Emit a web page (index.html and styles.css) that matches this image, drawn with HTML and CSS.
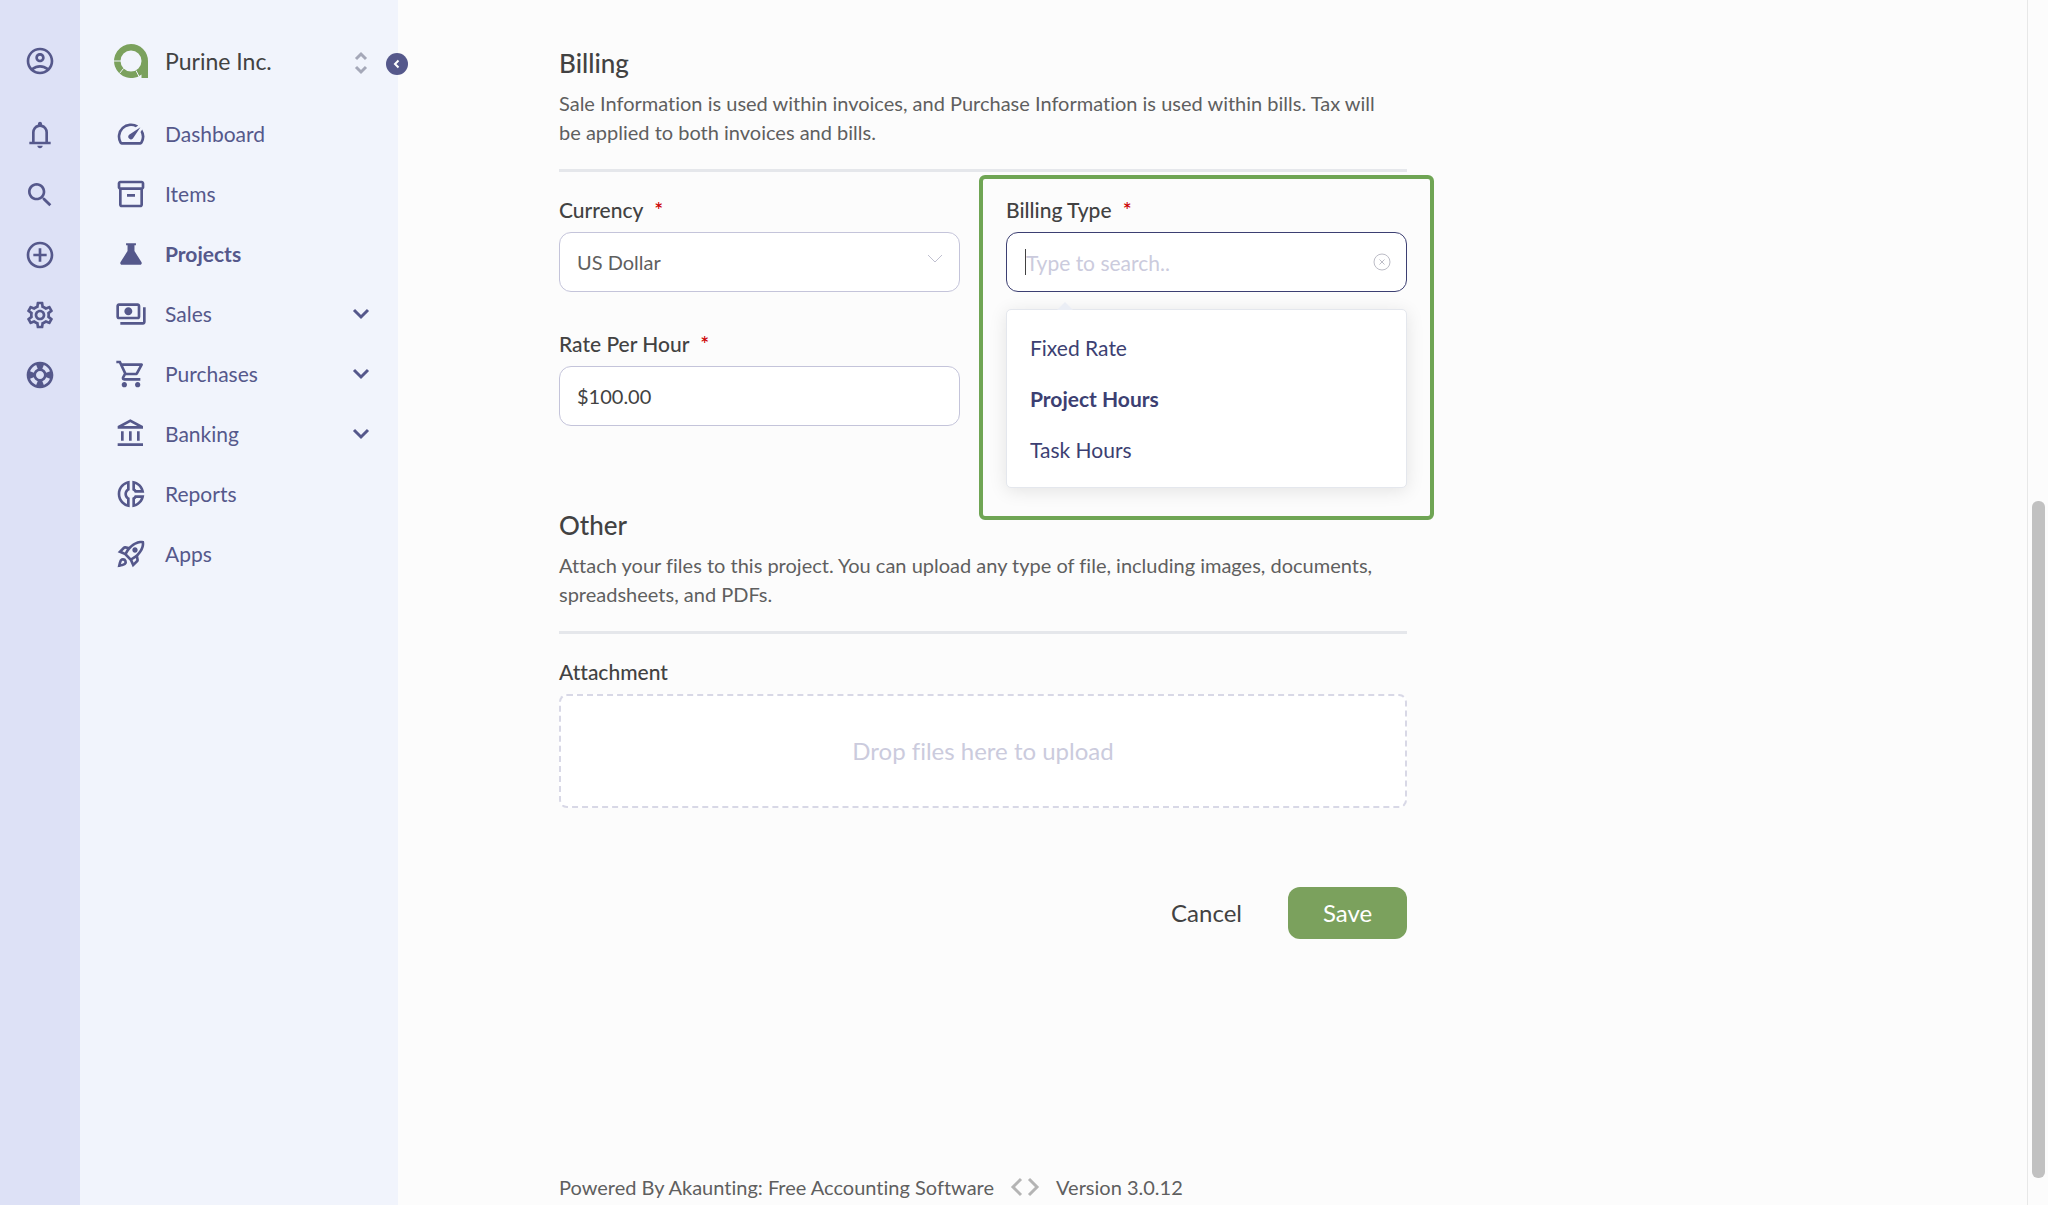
FILE: index.html
```html
<!DOCTYPE html>
<html lang="en">
<head>
<meta charset="utf-8">
<meta name="viewport" content="width=device-width, initial-scale=1">
<title>Edit Project - Purine Inc.</title>
<link rel="stylesheet" href="styles.css">
</head>
<body>
<div class="app">
  <nav class="rail" aria-label="Shortcuts">
    <a class="rail-link rail-profile" href="#" aria-label="Profile"><svg class="icon" viewBox="0 0 24 24"><path d="M12 2C6.48 2 2 6.48 2 12s4.480 10 10 10 10-4.480 10-10S17.520 2 12 2zM7.350 18.500C8.660 17.560 10.260 17 12 17s3.340.560 4.650 1.500c-1.310.940-2.910 1.500-4.650 1.500s-3.340-.560-4.650-1.500zm10.790-1.380C16.450 15.800 14.320 15 12 15s-4.450.800-6.140 2.120C4.700 15.730 4 13.950 4 12c0-4.420 3.580-8 8-8s8 3.580 8 8c0 1.950-.700 3.730-1.860 5.120zM12 6c-1.930 0-3.500 1.570-3.500 3.500S10.070 13 12 13s3.500-1.570 3.500-3.500S13.930 6 12 6zm0 5c-.830 0-1.500-.670-1.500-1.500S11.170 8 12 8s1.500.670 1.500 1.500S12.830 11 12 11z"/></svg></a>
    <a class="rail-link" href="#" aria-label="Notifications"><svg class="icon" viewBox="0 0 24 24"><path d="M4 19v-2h2v-7q0-2.075 1.250-3.688Q8.500 4.700 10.500 4.200v-.700q0-.625.438-1.062Q11.375 2 12 2t1.062.438q.438.437.438 1.062v.700q2 .500 3.250 2.112Q18 7.925 18 10v7h2v2Zm8 3q-.825 0-1.412-.587Q10 20.825 10 20h4q0 .825-.587 1.413Q12.825 22 12 22Zm-4-5h8v-7q0-1.650-1.175-2.825Q13.650 6 12 6q-1.650 0-2.825 1.175Q8 8.350 8 10Z"/></svg></a>
    <a class="rail-link" href="#" aria-label="Search"><svg class="icon" viewBox="0 0 24 24"><path d="M15.500 14h-.790l-.280-.270C15.410 12.590 16 11.110 16 9.500 16 5.910 13.090 3 9.500 3S3 5.910 3 9.500 5.910 16 9.500 16c1.610 0 3.090-.590 4.230-1.570l.270.280v.790l5 4.990L20.490 19l-4.990-5zm-6 0C7.010 14 5 11.990 5 9.500S7.010 5 9.500 5 14 7.010 14 9.500 11.990 14 9.500 14z"/></svg></a>
    <a class="rail-link" href="#" aria-label="New"><svg class="icon" viewBox="0 0 24 24"><path d="M13 7h-2v4H7v2h4v4h2v-4h4v-2h-4V7zm-1-5C6.480 2 2 6.480 2 12s4.480 10 10 10 10-4.480 10-10S17.520 2 12 2zm0 18c-4.410 0-8-3.590-8-8s3.590-8 8-8 8 3.590 8 8-3.590 8-8 8z"/></svg></a>
    <a class="rail-link" href="#" aria-label="Settings"><svg class="icon" viewBox="0 0 24 24"><path d="M19.43 12.98c.04-.32.07-.64.07-.98 0-.34-.03-.66-.07-.98l2.11-1.65c.19-.15.24-.42.12-.64l-2-3.46c-.09-.16-.26-.25-.44-.25-.06 0-.12.01-.17.03l-2.49 1c-.52-.4-1.08-.73-1.69-.98l-.38-2.65C14.46 2.18 14.25 2 14 2h-4c-.25 0-.46.18-.49.42l-.38 2.65c-.61.25-1.17.59-1.69.98l-2.49-1c-.06-.02-.12-.03-.18-.03-.17 0-.34.09-.43.25l-2 3.46c-.13.22-.07.49.12.64l2.11 1.65c-.04.32-.07.65-.07.98 0 .33.03.66.07.98l-2.11 1.65c-.19.15-.24.42-.12.64l2 3.46c.09.16.26.25.44.25.06 0 .12-.01.17-.03l2.49-1c.52.4 1.08.73 1.69.98l.38 2.65c.03.24.24.42.49.42h4c.25 0 .46-.18.49-.42l.38-2.65c.61-.25 1.17-.59 1.69-.98l2.49 1c.06.02.12.03.18.03.17 0 .34-.09.43-.25l2-3.46c.12-.22.07-.49-.12-.64l-2.11-1.65zm-1.98-1.71c.04.31.05.52.05.73 0 .21-.02.43-.05.73l-.14 1.13.89.7 1.08.84-.7 1.21-1.27-.51-1.04-.42-.9.68c-.43.32-.84.56-1.25.73l-1.06.43-.16 1.13-.2 1.35h-1.4l-.19-1.35-.16-1.13-1.06-.43c-.43-.18-.83-.41-1.23-.71l-.91-.7-1.06.43-1.27.51-.7-1.21 1.08-.84.89-.7-.14-1.13c-.03-.31-.05-.54-.05-.74s.02-.43.05-.73l.14-1.13-.89-.7-1.08-.84.7-1.21 1.27.51 1.04.42.9-.68c.43-.32.84-.56 1.25-.73l1.06-.43.16-1.13.2-1.35h1.39l.19 1.35.16 1.13 1.06.43c.43.18.83.41 1.23.71l.91.7 1.06-.43 1.27-.51.7 1.21-1.07.85-.89.7.14 1.13zM12 8c-2.21 0-4 1.79-4 4s1.79 4 4 4 4-1.79 4-4-1.79-4-4-4zm0 6c-1.1 0-2-.9-2-2s.9-2 2-2 2 .9 2 2-.9 2-2 2z"/></svg></a>
    <a class="rail-link" href="#" aria-label="Help"><svg class="icon" viewBox="0 0 24 24"><path d="M12 2C6.48 2 2 6.48 2 12s4.48 10 10 10 10-4.48 10-10S17.52 2 12 2zm7.46 7.12l-2.78 1.15c-.51-1.36-1.58-2.44-2.95-2.94l1.15-2.78c2.1.8 3.77 2.47 4.58 4.57zM12 15c-1.66 0-3-1.34-3-3s1.34-3 3-3 3 1.34 3 3-1.34 3-3 3zM9.13 4.54l1.17 2.78c-1.38.5-2.47 1.59-2.98 2.97L4.54 9.13c.81-2.11 2.48-3.78 4.59-4.59zM4.54 14.87l2.78-1.15c.51 1.38 1.59 2.46 2.97 2.96l-1.17 2.78c-2.1-.81-3.77-2.48-4.58-4.59zm10.34 4.59l-1.15-2.78c1.37-.51 2.45-1.59 2.95-2.97l2.78 1.17c-.81 2.1-2.48 3.77-4.58 4.58z"/></svg></a>
  </nav>

  <aside class="sidebar">
    <button class="company" type="button">
      <svg class="logo" viewBox="0 0 34 34"><path class="logo-fill" d="M17 0a17 17 0 0 1 17 17v17h-6.500v-3.600A17 17 0 1 1 17 0zm0 6.500a10.500 10.500 0 1 0 0 21 10.500 10.500 0 0 0 0-21z"/><path class="logo-gap" d="M0 17h7M9.500 24.500l-4 5M22 26.500l3 6"/></svg>
      <span class="company-name">Purine Inc.</span>
      <svg class="icon company-switch" viewBox="0 0 28 28"><path d="M9 10l5-5 5 5M9 18l5 5 5-5"/></svg>
    </button>
    <button class="collapse" type="button" aria-label="Collapse menu"><svg class="collapse-icon" viewBox="0 0 12 12"><path d="M7.500 2.500L4 6l3.500 3.500"/></svg></button>
    <nav class="menu" aria-label="Main">
      <a class="menu-link" href="#"><svg class="icon" viewBox="0 0 24 24"><path d="M20.38 8.57l-1.230 1.850a8 8 0 0 1-.220 7.580H5.070A8 8 0 0 1 15.580 6.850l1.850-1.230A10 10 0 0 0 3.350 19a2 2 0 0 0 1.720 1h13.850a2 2 0 0 0 1.740-1 10 10 0 0 0-.270-10.440zm-9.790 6.840a2 2 0 0 0 2.830 0l5.660-8.490-8.490 5.660a2 2 0 0 0 0 2.830z"/></svg><span>Dashboard</span></a>
      <a class="menu-link" href="#"><svg class="icon" viewBox="0 0 24 24"><path d="M20 2H4c-1 0-2 .9-2 2v3.010c0 .72.43 1.340 1 1.690V20c0 1.100 1.100 2 2 2h14c.9 0 2-.9 2-2V8.700c.57-.35 1-.97 1-1.690V4c0-1.100-1-2-2-2zm-1 18H5V9h14v11zm1-13H4V4h16v3zM9 12h6v2H9z"/></svg><span>Items</span></a>
      <a class="menu-link current" href="#" aria-current="page"><svg class="icon" viewBox="0 0 24 24"><path d="M8.300 4h7.400v1.400h-1.100v4.400l5.200 8.200c.6 1 .1 2-1 2H5.200c-1.100 0-1.600-1-1-2l5.200-8.200V5.400H8.300z"/></svg><span>Projects</span></a>
      <a class="menu-link" href="#"><svg class="icon" viewBox="0 0 24 24"><path d="M19 14V6c0-1.100-.9-2-2-2H3c-1.100 0-2 .9-2 2v8c0 1.100.9 2 2 2h14c1.100 0 2-.9 2-2zm-2 0H3V6h14v8zm-7-7c-1.660 0-3 1.340-3 3s1.340 3 3 3 3-1.340 3-3-1.340-3-3-3zm13 0v11c0 1.100-.9 2-2 2H4v-2h17V7h2z"/></svg><span>Sales</span><svg class="chevron" viewBox="0 0 18 12"><path d="M2 2l7 7 7-7"/></svg></a>
      <a class="menu-link" href="#"><svg class="icon" viewBox="0 0 24 24"><path d="M15.55 13c.75 0 1.41-.41 1.75-1.03l3.58-6.49c.37-.66-.11-1.48-.87-1.48H5.210l-.94-2H1v2h2l3.600 7.590-1.350 2.440C4.520 15.370 5.480 17 7 17h12v-2H7l1.100-2h7.450zM6.160 6h12.150l-2.760 5H8.530L6.160 6zM7 18c-1.100 0-1.990.9-1.990 2S5.900 22 7 22s2-.9 2-2-.9-2-2-2zm10 0c-1.100 0-1.990.9-1.990 2s.89 2 1.990 2 2-.9 2-2-.9-2-2-2z"/></svg><span>Purchases</span><svg class="chevron" viewBox="0 0 18 12"><path d="M2 2l7 7 7-7"/></svg></a>
      <a class="menu-link" href="#"><svg class="icon" viewBox="0 0 24 24"><path d="M6.500 10h-2v7h2v-7zm6 0h-2v7h2v-7zm8.500 9H2v2h19v-2zm-2.500-9h-2v7h2v-7zm-7-6.740L16.710 6H6.290l5.210-2.740m0-2.260L2 6v2h19V6l-9.500-5z"/></svg><span>Banking</span><svg class="chevron" viewBox="0 0 18 12"><path d="M2 2l7 7 7-7"/></svg></a>
      <a class="menu-link" href="#"><svg class="icon" viewBox="0 0 24 24"><path d="M14.820 11h7.130c-.47-4.720-4.230-8.480-8.950-8.950v7.130c.85.31 1.510.97 1.820 1.820zM15 4.580C17 5.400 18.600 7 19.420 9h-3.430c-.28-.37-.62-.71-.99-.99V4.580zM2 12c0 5.190 3.950 9.450 9 9.950v-7.130C9.840 14.400 9 13.300 9 12c0-1.300.84-2.400 2-2.820V2.050c-5.050.5-9 4.760-9 9.950zm7-7.420v3.440c-1.230.92-2 2.390-2 3.980 0 1.590.77 3.060 2 3.990v3.440C6.040 18.240 4 15.350 4 12c0-3.350 2.040-6.240 5-7.420zm4 10.240v7.130c4.720-.47 8.480-4.230 8.950-8.950h-7.130c-.31.85-.97 1.510-1.820 1.820zm2 1.170c.37-.28.71-.61.99-.99h3.430C18.600 17 17 18.600 15 19.420v-3.430z"/></svg><span>Reports</span></a>
      <a class="menu-link" href="#"><svg class="icon" viewBox="0 0 24 24"><path d="M6 15c-.83 0-1.580.34-2.120.88C2.700 17.060 2 22 2 22s4.940-.7 6.120-1.880A2.996 2.996 0 0 0 6 15zm.71 3.710c-.28.28-2.170.76-2.170.76s.47-1.880.76-2.170c.17-.19.42-.3.7-.3a1.003 1.003 0 0 1 .71 1.710zm10.710-5.060c6.360-6.360 4.240-11.310 4.240-11.310S16.710.22 10.350 6.580l-2.490-.5a2.030 2.030 0 0 0-1.810.55L2 10.690l5 2.140L11.170 17l2.140 5 4.050-4.050c.47-.47.68-1.150.55-1.810l-.49-2.490zM7.410 10.830l-1.910-.82 1.970-1.970 1.440.29c-.57.83-1.080 1.700-1.500 2.500zm6.580 7.670-.82-1.910c.8-.42 1.670-.93 2.490-1.500l.29 1.440-1.960 1.970zM16 12.240c-1.320 1.320-3.380 2.400-4.040 2.730l-2.930-2.930c.32-.65 1.400-2.710 2.730-4.040 4.680-4.680 8.230-3.990 8.230-3.990s.69 3.550-3.990 8.230zM15 11c1.100 0 2-.9 2-2s-.9-2-2-2-2 .9-2 2 .9 2 2 2z"/></svg><span>Apps</span></a>
    </nav>
  </aside>

  <main class="main">
    <form class="form">
      <section class="section">
        <header class="section-head">
          <h2 class="section-title">Billing</h2>
          <p class="section-text">Sale Information is used within invoices, and Purchase Information is used within bills. Tax will be applied to both invoices and bills.</p>
        </header>
        <div class="fields">
          <div class="field">
            <label class="label" for="currency">Currency <span class="required">*</span></label>
            <div class="control">
              <select class="input input-select" id="currency"><option>US Dollar</option></select>
              <svg class="select-arrow" viewBox="0 0 16 10"><path d="M1 1l7 7 7-7"/></svg>
            </div>
          </div>
          <div class="field highlighted">
            <label class="label" for="billing-type">Billing Type <span class="required">*</span></label>
            <div class="control control-open">
              <span class="caret"></span>
              <input class="input" id="billing-type" type="text" placeholder="Type to search.." autocomplete="off">
              <button class="clear" type="button" aria-label="Clear"><svg class="clear-icon" viewBox="0 0 18 18"><circle cx="9" cy="9" r="8"/><path d="M6.500 6.500l5 5M11.500 6.500l-5 5"/></svg></button>
            </div>
            <ul class="dropdown" role="listbox" aria-label="Billing Type">
              <li class="option" role="option">Fixed Rate</li>
              <li class="option selected" role="option" aria-selected="true">Project Hours</li>
              <li class="option" role="option">Task Hours</li>
            </ul>
          </div>
          <div class="field">
            <label class="label" for="rate">Rate Per Hour <span class="required">*</span></label>
            <div class="control">
              <input class="input" id="rate" type="text" value="$100.00">
            </div>
          </div>
        </div>
      </section>

      <section class="section">
        <header class="section-head">
          <h2 class="section-title">Other</h2>
          <p class="section-text">Attach your files to this project. You can upload any type of file, including images, documents, spreadsheets, and PDFs.</p>
        </header>
        <div class="field">
          <span class="label" id="attachment-label">Attachment</span>
          <button class="dropzone" type="button" aria-describedby="attachment-label">Drop files here to upload</button>
        </div>
      </section>

      <div class="actions">
        <button class="button" type="button">Cancel</button>
        <button class="button button-primary" type="submit">Save</button>
      </div>
    </form>

    <footer class="footer">
      <span>Powered By Akaunting: <a class="footer-link" href="#">Free Accounting Software</a></span>
      <svg class="code-icon" viewBox="0 0 30 20"><path d="M11 2L3 10l8 8M19 2l8 8-8 8"/></svg>
      <span>Version 3.0.12</span>
    </footer>
  </main>

  <div class="scroll-track" aria-hidden="true"><div class="scroll-thumb"></div></div>
</div>
</body>
</html>
```

FILE: styles.css
```css
:root {
  --purple: #55588b;
  --purple-dark: #3c3f72;
  --lilac: #cbcbdd;
  --green: #7ba15d;
  --text: #424242;
  --text-soft: #5f5f5f;
}

*,
*::before {
  box-sizing: border-box;
}

body {
  margin: 0;
  background: #fcfcfc;
  color: var(--text);
  font-family: Lato, "Open Sans", sans-serif;
  font-size: 20px;
  font-variant-ligatures: none;
  line-height: 28px;
}

button,
input,
select {
  font: inherit;
  font-variant-ligatures: none;
  color: inherit;
}

button {
  padding: 0;
  border: 0;
  background: none;
  cursor: pointer;
}

a {
  color: inherit;
  text-decoration: none;
}

.app {
  display: grid;
  grid-template-columns: 80px 318px minmax(0, 1fr) 21px;
  min-height: 100vh;
}

.icon {
  width: 32px;
  height: 32px;
  flex: none;
  fill: currentColor;
}

/* Shortcut rail */
.rail {
  display: flex;
  flex-direction: column;
  padding-top: 31px;
  background: #dde1f6;
  color: var(--purple);
}

.rail-link {
  display: flex;
  align-items: center;
  justify-content: center;
  height: 60px;
}

.rail-profile {
  margin-bottom: 14px;
}

/* Sidebar */
.sidebar {
  position: relative;
  padding: 31px 22px 0 34px;
  background: #f1f4fc;
}

.company {
  display: flex;
  align-items: center;
  width: 100%;
  height: 60px;
  margin-bottom: 13px;
  text-align: left;
}

.company-name {
  flex: 1;
  margin-left: 17px;
  font-size: 23px;
}

.logo {
  width: 34px;
  height: 34px;
}

.logo-fill {
  fill: var(--green);
}

.logo-gap {
  fill: none;
  stroke: #f1f4fc;
  stroke-width: 1;
}

.company-switch {
  width: 28px;
  height: 28px;
  margin: 4px 1px 0 0;
  fill: none;
  stroke: #a5a8b8;
  stroke-width: 3;
}

.collapse {
  position: absolute;
  top: 53px;
  right: -10px;
  display: flex;
  align-items: center;
  justify-content: center;
  width: 22px;
  height: 22px;
  border-radius: 50%;
  background: var(--purple);
}

.collapse-icon {
  width: 12px;
  height: 12px;
  fill: none;
  stroke: #fff;
  stroke-width: 2;
}

.menu-link {
  display: flex;
  align-items: center;
  gap: 18px;
  height: 60px;
  padding-left: 1px;
  color: var(--purple);
  font-size: 21px;
}

.menu-link.current {
  font-weight: 700;
}

.chevron {
  width: 18px;
  height: 12px;
  margin: 0 6px 0 auto;
  fill: none;
  stroke: currentColor;
  stroke-width: 3;
}

/* Form */
.main {
  display: flex;
  flex-direction: column;
  padding: 47px 40px 4px 161px;
}

.form,
.footer {
  width: 100%;
  max-width: 848px;
}

.section + .section {
  margin-top: 83px;
}

.section-head {
  margin-bottom: 24px;
  padding-bottom: 22px;
  border-bottom: 3px solid #e5e7eb;
}

.section-title {
  margin: 0 0 10px;
  font-size: 26px;
  font-weight: 500;
  line-height: 32px;
}

.section-text {
  margin: 0;
  padding-right: 20px;
  color: var(--text-soft);
  line-height: 29px;
}

.fields {
  display: grid;
  grid-template-columns: 1fr 1fr;
  gap: 38px 46px;
}

.field {
  display: flex;
  flex-direction: column;
  gap: 8px;
}

.label {
  font-size: 21px;
  font-weight: 500;
}

.required {
  margin-left: 6px;
  color: #cc0000;
}

.control {
  position: relative;
  display: flex;
  align-items: center;
  height: 60px;
  border: 1px solid #c4c4da;
  border-radius: 12px;
  background: #fff;
}

.control-open {
  padding-left: 18px;
  border-color: var(--purple-dark);
}

.input {
  flex: 1;
  min-width: 0;
  height: 100%;
  padding: 0 17px;
  border: 0;
  outline: 0;
  background: none;
  appearance: none;
}

.input-select {
  color: var(--text-soft);
}

.control-open .input {
  padding: 0;
  font-size: 21px;
}

.input::placeholder {
  color: var(--lilac);
  opacity: 1;
}

.select-arrow {
  position: absolute;
  top: 21px;
  right: 16px;
  width: 16px;
  height: 10px;
  fill: none;
  stroke: #c0c0d0;
  pointer-events: none;
}

.caret {
  width: 1px;
  height: 26px;
  background: var(--text);
}

.clear {
  margin-right: 15px;
}

.clear-icon {
  display: block;
  width: 18px;
  height: 18px;
  fill: none;
  stroke: #bcbcc6;
}

.highlighted {
  position: relative;
}

.highlighted::before {
  content: "";
  position: absolute;
  top: -21px;
  left: -27px;
  right: -27px;
  height: 345px;
  border: 4px solid #6fa554;
  border-radius: 6px;
  pointer-events: none;
}

.dropdown {
  position: absolute;
  top: 113px;
  left: 0;
  right: 0;
  margin: 0;
  padding: 12px 0;
  border: 1px solid #e4e7ed;
  border-radius: 5px;
  background: #fff;
  box-shadow: 0 3px 18px rgba(0, 0, 0, 0.1);
  color: var(--purple-dark);
  font-size: 21px;
  list-style: none;
}

.dropdown::before {
  content: "";
  position: absolute;
  top: -8px;
  left: 50px;
  border: 8px solid transparent;
  border-top: 0;
  border-bottom-color: #ebeef5;
}

.option {
  padding: 0 23px;
  line-height: 51px;
}

.option.selected {
  font-weight: 700;
}

.dropzone {
  height: 114px;
  border: 2px dashed #d8d8e6;
  border-radius: 8px;
  background: #fff;
  color: var(--lilac);
  font-size: 24px;
}

.actions {
  display: flex;
  justify-content: flex-end;
  gap: 22px;
  margin-top: 79px;
}

.button {
  width: 119px;
  height: 52px;
  border-radius: 12px;
  font-size: 24px;
}

.button-primary {
  background: var(--green);
  color: #fff;
}

.footer {
  display: flex;
  align-items: center;
  gap: 16px;
  margin-top: auto;
  color: var(--text-soft);
}

.code-icon {
  width: 30px;
  height: 20px;
  fill: none;
  stroke: #b4b4b4;
  stroke-width: 3;
}

/* Scroll indicator */
.scroll-track {
  position: sticky;
  top: 0;
  height: 100vh;
  padding: 501px 3px 27px 4px;
  border-left: 1px solid #e8e8e8;
}

.scroll-thumb {
  height: 100%;
  border-radius: 6px;
  background: #c1c1c1;
}
```
